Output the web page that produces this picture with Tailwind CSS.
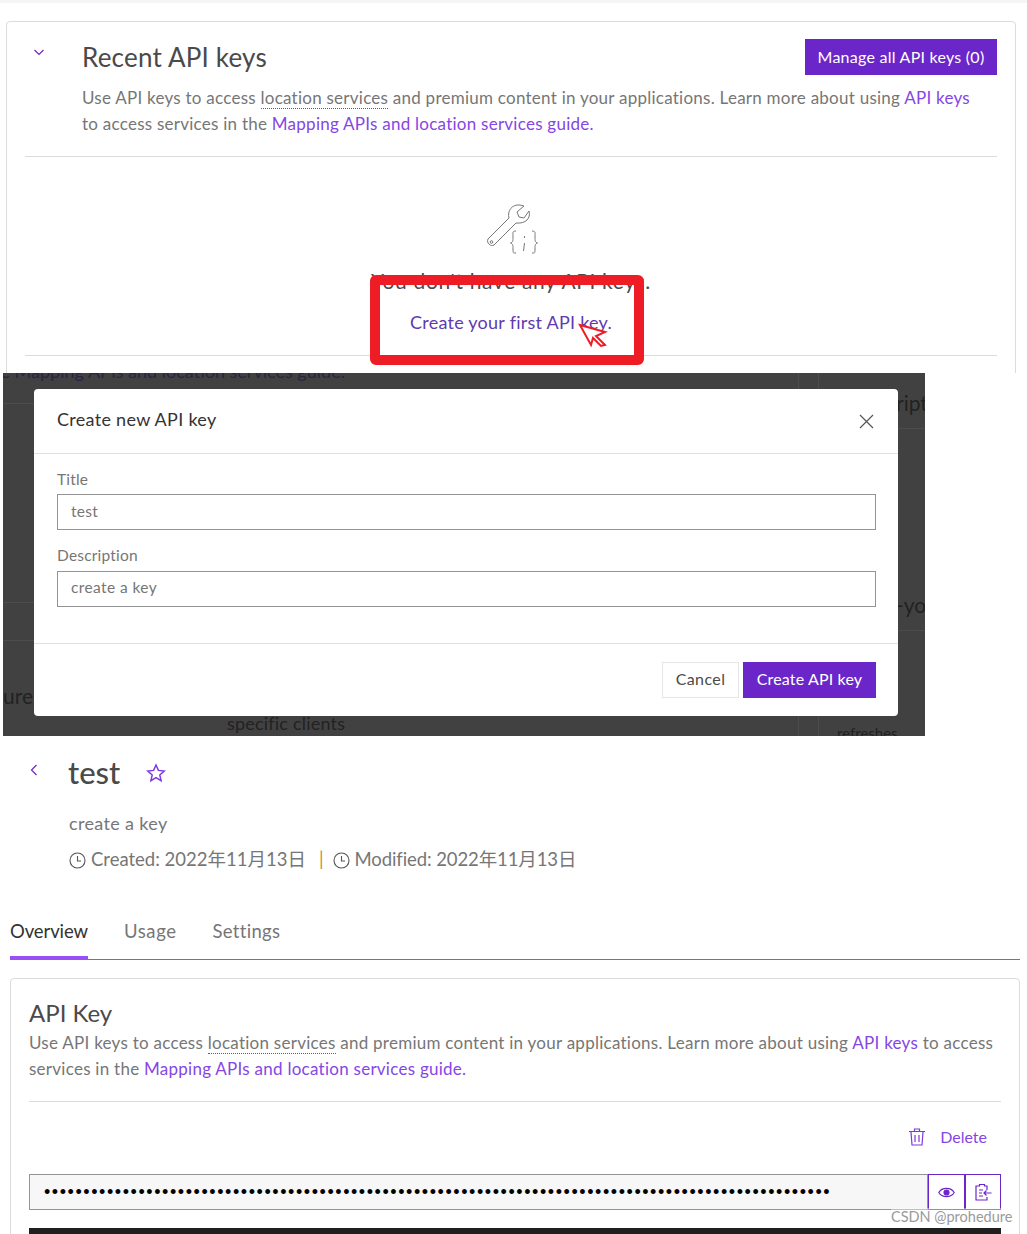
<!DOCTYPE html>
<html lang="en">
<head>
    <meta charset="UTF-8">
    <title>API keys</title>
    <script src="https://cdn.jsdelivr.net/npm/@tailwindcss/browser@4"></script>
</head>
<body class="bg-white">
<div class="relative w-[1027px] h-[1234px] overflow-hidden bg-white font-[Lato,'Noto_Sans_CJK_SC',sans-serif] text-[#767676]">

    <!-- recent keys -->
    <section class="relative h-[373px] overflow-hidden border-t-[3px] border-[#f5f5f5]">
        <div class="mt-[18px] ml-[6px] w-[1010px] h-[400px] border border-[#dcdcdc] rounded-t px-[18px]">
            <div class="flex h-[135px] border-b border-[#dcdcdc]">
                <div class="w-[57px] pl-[9px] pt-[27px]">
                    <svg class="w-[10px] h-[7px]" viewBox="0 0 10 7" fill="none" stroke="#6b26c9" stroke-width="1.2"><path d="M0.5 1 L5 5.5 L9.5 1"/></svg>
                </div>
                <div class="flex-1">
                    <div class="flex justify-between items-start pt-[17px]">
                        <h2 class="text-[26px] tracking-[0.2px] leading-[36px] text-[#4a4a4a]">Recent API keys</h2>
                        <a class="h-[36px] w-[192px] flex items-center justify-center bg-[#6b26c9] text-white text-[16px] tracking-[0.25px]">Manage all API keys (0)</a>
                    </div>
                    <p class="mt-[10px] text-[17px] tracking-[0.25px] leading-[26px] whitespace-nowrap">Use API keys to access <span class="border-b border-dotted border-[#7c3ae0]">location services</span> and premium content in your applications. Learn more about using <span class="text-[#8546e6]">API keys</span><br>to access services in the <span class="text-[#8546e6]">Mapping APIs and location services guide.</span></p>
                </div>
            </div>
            <div class="flex flex-col items-center h-[199px] border-b border-[#dcdcdc]">
                <svg class="mt-[46px] ml-[1px] w-[52px] h-[52px]" viewBox="0 0 52 52" fill="none" stroke="#777" stroke-width="1">
                    <path d="M2 36 L23 15 C21 8 26 1 34 2 L38 3 L31 9 L33 14 L38 15 L43 8 C45 15 40 21 30 20 L8 42 C5 44 0 40 2 36 Z"/>
                    <circle cx="5.500" cy="39" r="1.300"/>
                    <path d="M30 28 C26 28 27 30 27 34 C27 38 27 39 24.500 40 C27 41 27 42 27 46 C27 50 27 50 30 50"/>
                    <path d="M46 28 C50 28 49 30 49 34 C49 38 49 39 51.500 40 C49 41 49 42 49 46 C49 50 49 50 46 50"/>
                    <path d="M38.500 33 V35 M38.500 40 L37.500 48"/>
                </svg>
                <p class="mt-[13px] text-[21px] tracking-[0.65px] leading-[26px] text-[#4a4a4a] whitespace-nowrap">You don't have any API keys.</p>
                <a class="mt-[15px] text-[#5f3ab0] text-[18px] tracking-[0.25px] leading-[26px]">Create your first API key.</a>
            </div>
        </div>
        <!-- red annotation on the screenshot -->
        <div class="absolute left-[370px] top-[272px] w-[274px] h-[90px] border-[10px] border-[#ee1c25] rounded-md"></div>
        <svg class="absolute left-[578px] top-[318px] w-[30px] h-[32px]" viewBox="0 0 30 32" fill="white" stroke="#ee1c25" stroke-width="2"><path d="M2 4 L27 11 L18 15 L27 24 L23 25 L15 17 L13 24 Z"/></svg>
    </section>

    <!-- dialog -->
    <section class="relative ml-[3px] w-[922px] h-[363px] bg-[#414141] pt-[16px] pl-[31px] overflow-hidden">
        <!-- dimmed page behind the dialog -->
        <span class="absolute left-[-19px] top-[-15px] text-[18px] leading-[26px] text-[#2c2445] whitespace-nowrap">the Mapping APIs and location services guide.</span>
        <span class="absolute left-[893px] top-[16px] text-[21px] leading-[28px] text-[#222] whitespace-nowrap">ript</span>
        <span class="absolute left-[893px] top-[218px] text-[21px] leading-[28px] text-[#222] whitespace-nowrap">-yo</span>
        <span class="absolute left-0 top-[310px] text-[21px] leading-[26px] text-[#222] whitespace-nowrap">ure y</span>
        <span class="absolute left-[224px] top-[337px] text-[18px] tracking-[0.2px] leading-[26px] text-[#222] whitespace-nowrap">specific clients</span>
        <span class="absolute left-[834px] top-[349px] text-[15px] leading-[22px] text-[#222] whitespace-nowrap">refreshes</span>
        <div class="absolute left-0 top-[30px] w-[31px] h-px bg-[#4c4c4c]"></div>
        <div class="absolute left-0 top-[229px] w-[31px] h-px bg-[#4c4c4c]"></div>
        <div class="absolute left-0 top-[267px] w-[31px] h-px bg-[#4c4c4c]"></div>
        <div class="absolute left-[895px] top-[55px] w-[27px] h-px bg-[#4c4c4c]"></div>
        <div class="absolute left-[895px] top-[257px] w-[27px] h-px bg-[#4c4c4c]"></div>
        <div class="absolute left-[795px] top-0 h-[363px] w-px bg-[#4c4c4c]"></div>
        <div class="absolute left-[815px] top-0 h-[363px] w-px bg-[#4c4c4c]"></div>

        <div class="relative w-[864px] h-[327px] bg-white rounded flex flex-col">
            <div class="flex items-center justify-between h-[65px] pl-[23px] pr-[24px] border-b border-[#e0e0e0]">
                <h3 class="text-[18px] tracking-[0.3px] leading-[24px] mb-[4px] text-[#333]">Create new API key</h3>
                <svg class="w-[15px] h-[15px]" viewBox="0 0 15 15" stroke="#555" stroke-width="1.200"><path d="M1 1 L14 14 M14 1 L1 14"/></svg>
            </div>
            <div class="h-[190px] pl-[23px] pr-[22px] pt-[14px] border-b border-[#e0e0e0]">
                <label class="block text-[15.5px] tracking-[0.2px] leading-[22px]">Title</label>
                <div class="mt-[4px] h-[36px] flex items-center px-[13px] border border-[#949494] text-[15.5px] tracking-[0.3px]">test</div>
                <label class="block mt-[14px] text-[15.5px] tracking-[0.2px] leading-[22px]">Description</label>
                <div class="mt-[5px] h-[36px] flex items-center px-[13px] pb-[2px] border border-[#949494] text-[15.5px] tracking-[0.4px]">create a key</div>
            </div>
            <div class="flex justify-end gap-[4px] px-[22px] pt-[18px]">
                <button class="w-[77px] h-[36px] pb-[3px] border border-[#e6e6e6] text-[16px] tracking-[0.4px] text-[#4a4a4a]">Cancel</button>
                <button class="w-[133px] h-[36px] pb-[3px] bg-[#6b26c9] text-[16px] tracking-[0.15px] text-white">Create API key</button>
            </div>
        </div>
    </section>

    <!-- key details -->
    <section class="relative">
        <div class="flex items-center h-[74px] pl-[30px]">
            <svg class="w-[8px] h-[12px] mb-[6px]" viewBox="0 0 8 12" fill="none" stroke="#6b26c9" stroke-width="1.200"><path d="M6.500 1 L1.500 6 L6.500 11"/></svg>
            <h1 class="ml-[30px] mb-[2px] text-[31px] font-medium text-[#4a4a4a]">test</h1>
            <svg class="ml-[26px] w-[20px] h-[20px]" viewBox="0 0 20 20" fill="none" stroke="#7c3ae0" stroke-width="1.500"><path d="M10 2 L12.400 7.400 L18.200 8 L13.800 11.900 L15.100 17.700 L10 14.700 L4.900 17.700 L6.200 11.900 L1.800 8 L7.600 7.400 Z"/></svg>
        </div>
        <p class="ml-[69px] text-[18px] tracking-[0.35px] leading-[26px]">create a key</p>
        <div class="flex items-center mt-[10px] ml-[69px] text-[18.5px] leading-[26px]">
            <svg class="w-[17px] h-[17px] mt-[3px]" viewBox="0 0 17 17" fill="none" stroke="#555" stroke-width="1.100"><circle cx="8.500" cy="8.500" r="7.500"/><path d="M8.500 4 V9 H12"/></svg>
            <span class="ml-[5px]">Created: 2022年11月13日</span>
            <span class="ml-[13px] text-[#c98a3c]">|</span>
            <svg class="ml-[9px] w-[17px] h-[17px] mt-[3px]" viewBox="0 0 17 17" fill="none" stroke="#555" stroke-width="1.100"><circle cx="8.500" cy="8.500" r="7.500"/><path d="M8.500 4 V9 H12"/></svg>
            <span class="ml-[5px] tracking-[-0.1px]">Modified: 2022年11月13日</span>
        </div>

        <nav class="flex gap-[36px] mt-[44px] ml-[10px] w-[1010px] h-[44px] border-b border-[#777] text-[18.5px]">
            <a class="h-[44px] border-b-4 border-[#9850f5] text-[#333] tracking-[-0.1px] leading-[30px]">Overview</a>
            <a class="tracking-[0.6px] leading-[30px]">Usage</a>
            <a class="tracking-[0.3px] leading-[30px]">Settings</a>
        </nav>

        <div class="mt-[18px] ml-[10px] w-[1010px] h-[300px] border border-[#dcdcdc] rounded-t px-[18px]">
            <h2 class="mt-[17px] text-[24px] leading-[34px] text-[#4a4a4a]">API Key</h2>
            <p class="text-[17px] tracking-[0.26px] leading-[26px] whitespace-nowrap">Use API keys to access <span class="border-b border-dotted border-[#7c3ae0]">location services</span> and premium content in your applications. Learn more about using <span class="text-[#8546e6]">API keys</span> to access<br>services in the <span class="text-[#8546e6]">Mapping APIs and location services guide.</span></p>
            <div class="mt-[19px] border-t border-[#dcdcdc]"></div>
            <div class="flex justify-end items-center h-[72px] pr-[14px] pb-[2px]">
                <svg class="w-[16px] h-[18px]" viewBox="0 0 16 18" fill="none" stroke="#7c3ae0" stroke-width="1.200"><path d="M0 3.500 H16 M5.500 3 V1 H10.500 V3 M2 4 L3 17 H13 L14 4 M6 7 V14 M10 7 V14"/></svg>
                <span class="ml-[15px] text-[16px] text-[#8546e6]">Delete</span>
            </div>
            <div class="flex h-[36px]">
                <div class="flex-1 flex items-center pl-[14px] bg-[#f7f7f7] border border-[#949494] text-black font-['Liberation_Sans'] text-[18px] tracking-[1.57px] overflow-hidden whitespace-nowrap">••••••••••••••••••••••••••••••••••••••••••••••••••••••••••••••••••••••••••••••••••••••••••••••••••••</div>
                <div class="w-[37px] flex items-center justify-center border border-[#6b26c9]">
                    <svg class="w-[17px] h-[11px]" viewBox="0 0 17 11" fill="none" stroke="#6b26c9" stroke-width="1.200"><path d="M0.800 5.500 C4 0 13 0 16.200 5.500 C13 11 4 11 0.800 5.500 Z"/><circle cx="8.500" cy="5.500" r="2.500" fill="#6b26c9"/></svg>
                </div>
                <div class="w-[36px] flex items-center justify-center border border-[#6b26c9]">
                    <svg class="w-[18px] h-[18px]" viewBox="0 0 18 18" fill="none" stroke="#6b26c9" stroke-width="1.200"><path d="M13 7 V3 H10.500 V1.500 H5.500 V3 H2 V17 H13 V14"/><path d="M5 7 H9 M5 10 H8 M5 13 H9"/><path d="M17.500 10 H10 M12.500 7.500 L10 10 L12.500 12.500"/></svg>
                </div>
            </div>
            <div class="mt-[18px] h-[6px] bg-[#1f1f1f]"></div>
        </div>
    </section>

    <span class="absolute left-[891px] top-[1208px] text-[14.5px] leading-[18px] text-[#9a9a9a] bg-white/40">CSDN @prohedure</span>
</div>
</body>
</html>
